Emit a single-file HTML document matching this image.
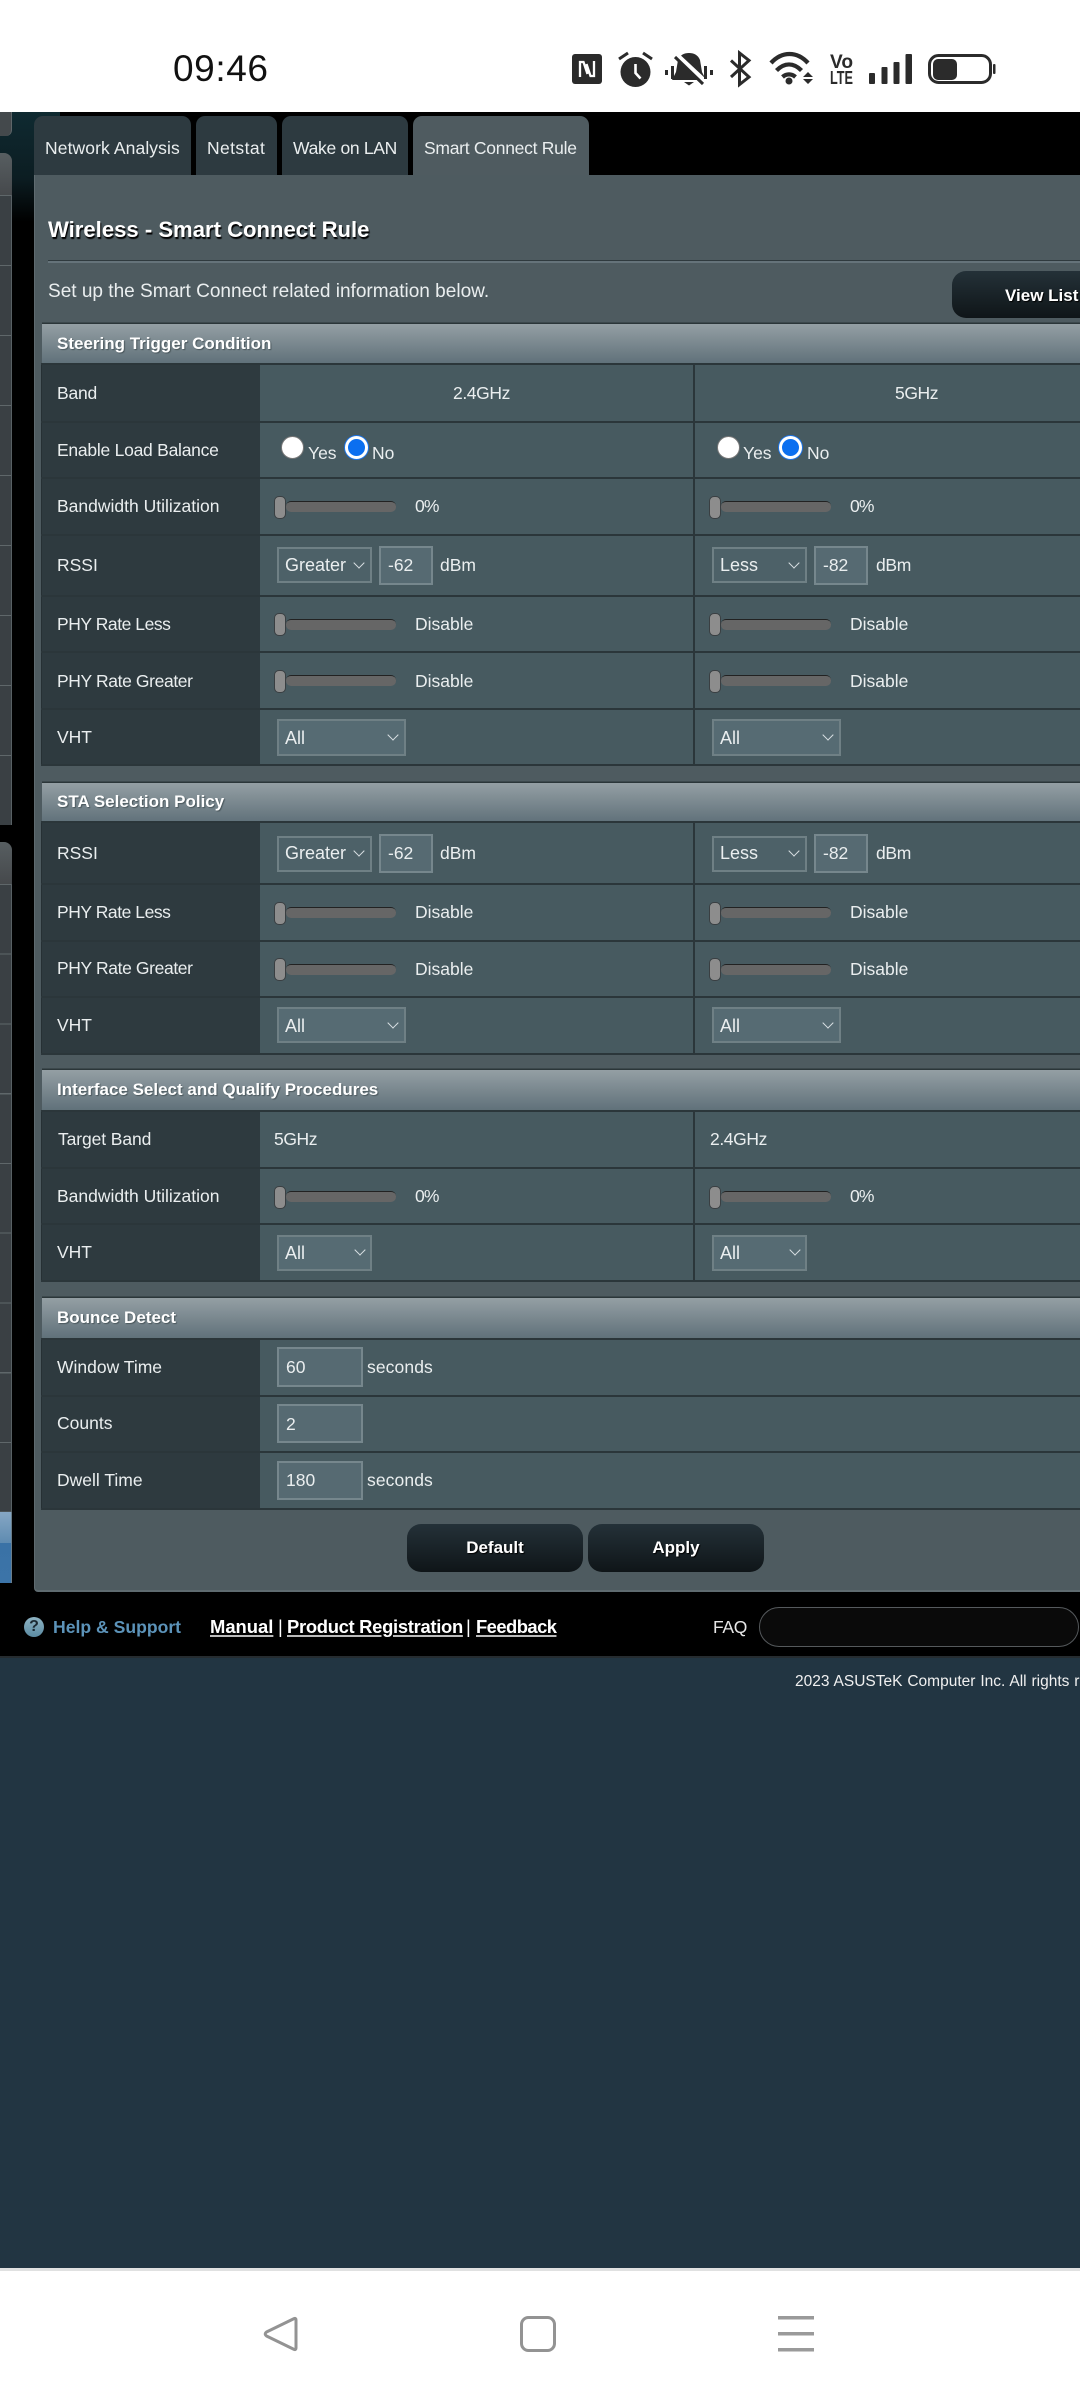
<!DOCTYPE html>
<html>
<head>
<meta charset="utf-8">
<title>Wireless - Smart Connect Rule</title>
<style>
html,body{margin:0;padding:0;background:#fff}
body{position:relative;width:1080px;height:2400px;overflow:hidden;font-family:"Liberation Sans",Arial,sans-serif;color:#eef2f3}
div,span,svg{position:absolute}
a,b,i{position:static}
.t{line-height:22px;font-size:17.5px;white-space:nowrap;color:#eaeeef}
.h{line-height:22px;font-size:17px;font-weight:bold;white-space:nowrap;color:#fff;left:57px;text-shadow:1px 1px 1px #4a575c}
.hd{left:42px;width:1038px;height:40px;background:linear-gradient(180deg,#949fa4,#5f7079);box-shadow:0 -1.5px 0 #2b3639}
.tb{left:41px;width:1039px;background:linear-gradient(90deg,#2e3a3f 218px,#475a60 218px);border-left:1px solid #263034;box-sizing:border-box}
.ln{left:41px;width:1039px;height:2px;background:#2b363a}
.dv{left:693px;width:2px;background:#2b363a}
.tr{width:110px;height:11px;background:#666;border-radius:5px;border-top:1px solid #222;box-sizing:border-box}
.th{width:12px;height:23px;background:#8d8d8d;border:1px solid #3a3f42;border-radius:5px;box-sizing:border-box}
.s{height:36px;box-sizing:border-box;border:2px solid #6f8085;background:#4d6168}
.s2{background:#566b73}
.i{box-sizing:border-box;border:2px solid #76878d;background:#566a72}
.cv{width:8px;height:8px;border:solid #d8dfe2;border-width:0 1.5px 1.5px 0;transform:rotate(45deg);box-sizing:border-box}
.ra{width:23px;height:23px;border-radius:50%;background:#fff;border:1.5px solid #777;box-sizing:border-box}
.rb{width:23px;height:23px;border-radius:50%;background:#0b6ff0;border:3px solid #fff;box-shadow:0 0 0 1px #1b74e8;box-sizing:border-box}
.tab{top:116px;height:59px;background:#2d3a40;border-radius:9px 9px 0 0}
.btn{background:linear-gradient(180deg,#243138,#0f1518);border-radius:14px;color:#fff;font-weight:bold;font-size:17px;text-align:center;text-shadow:1px 1px 1px #000}
.f{top:1616px;line-height:22px;font-size:18.4px;font-weight:bold;color:#fff;white-space:nowrap}
.f u{text-decoration:underline;text-decoration-color:#bbb;text-decoration-thickness:2px;text-underline-offset:2px}
</style>
</head>
<body>

<!-- status bar -->
<div style="left:0;top:0;width:1080px;height:112px;background:#fff"></div>
<div class="t" style="left:173px;top:47px;line-height:44px;font-size:37px;letter-spacing:.6px;color:#111">09:46</div>
<svg style="left:0;top:0" width="1080" height="112" viewBox="0 0 1080 112">
  <g fill="#2b2b2b" stroke="none">
    <rect x="572" y="54" width="30" height="30" rx="3"/>
    <circle cx="635.5" cy="72" r="15"/>
    <path d="M678 60c2-5 6-7 11-7s9 2 11 7l2 12 4 8h-34l4-8z"/>
    <path d="M684 82h10l-5 3.500z"/>
  </g>
  <g fill="none" stroke="#fff">
    <path d="M580 77V62h3.500l4 12M594 61v15h-3.500l-4-12" transform="translate(0 0)" stroke-width="2.300"/>
    <path d="M635.500 64v9l5 5.500" stroke-width="2.600"/>
    <path d="M676 54l30 28" stroke-width="4.500"/>
  </g>
  <g fill="#2b2b2b" stroke="none">
    <rect x="665" y="70" width="3" height="5"/>
    <rect x="671" y="66" width="3" height="13"/>
    <rect x="704" y="66" width="3" height="13"/>
    <rect x="710" y="70" width="3" height="5"/>
    <circle cx="789" cy="81" r="3.500"/>
    <path d="M803 77l5-5 5 5zM803 79h10l-5 5z"/>
    <rect x="869" y="73" width="6" height="11" rx="1"/>
    <rect x="881.500" y="67" width="6" height="17" rx="1"/>
    <rect x="893.500" y="62" width="6" height="22" rx="1"/>
    <rect x="905.500" y="54" width="6.500" height="30" rx="1"/>
    <rect x="933" y="59" width="24" height="21" rx="5"/>
    <rect x="993" y="64" width="2.500" height="10" rx="1"/>
  </g>
  <g fill="none" stroke="#2b2b2b">
    <path d="M619 59l9-6M652 59l-9-6" stroke-width="3"/>
    <path d="M675 57l28 27" stroke-width="3"/>
    <path d="M731 60.500l18 16.500-9.500 7.500V53l9.500 7.500-18 16.500" stroke-width="3"/>
    <path d="M771 63c11-12 26-12 37 0M776.500 70.500c8-8 17-8 25 0M782.500 77c4-3.500 9-3.500 13 0" stroke-width="4.300"/>
    <rect x="929.500" y="55.500" width="61" height="27" rx="9" stroke-width="3"/>
  </g>
  <text x="830" y="68" font-family="Liberation Sans" font-weight="bold" font-size="19" fill="#2b2b2b" textLength="23" lengthAdjust="spacingAndGlyphs">Vo</text>
  <text x="830" y="84" font-family="Liberation Sans" font-weight="bold" font-size="18" fill="#2b2b2b" textLength="23" lengthAdjust="spacingAndGlyphs">LTE</text>
</svg>

<!-- black page header -->
<div style="left:0;top:112px;width:1080px;height:1544px;background:#000"></div>
<div style="left:0;top:112px;width:60px;height:110px;background:linear-gradient(180deg,#0f2a31,#0c1d22 60%,#000)"></div>

<!-- sidebar -->
<div style="left:0;top:112px;width:12px;height:24px;background:#44494c;border-radius:0 0 6px 0;border-right:1px solid #5e6669;box-sizing:border-box"></div>
<div style="left:0;top:153px;width:12px;height:42px;background:linear-gradient(180deg,#575e61,#46494c);border-radius:0 8px 0 0"></div>
<div style="left:0;top:195px;width:12px;height:630px;background:repeating-linear-gradient(180deg,#5f676a 0 1px,#3a4044 1px 70px);border-right:1px solid #586064;box-sizing:border-box"></div>
<div style="left:0;top:842px;width:12px;height:42px;background:linear-gradient(180deg,#575e61,#46494c);border-radius:0 8px 0 0"></div>
<div style="left:0;top:884px;width:12px;height:628px;background:repeating-linear-gradient(180deg,#5f676a 0 1px,#3a4044 1px 69.75px);border-right:1px solid #586064;box-sizing:border-box"></div>
<div style="left:0;top:1512px;width:12px;height:71px;background:linear-gradient(180deg,#86a7c4 0,#5e8bb1 44%,#3a72a6 44%,#3c74a8 100%);border-right:1px solid #6a7c88;box-sizing:border-box"></div>

<!-- tabs -->
<div class="tab" style="left:34px;width:157px"></div>
<div class="tab" style="left:196px;width:81px"></div>
<div class="tab" style="left:282px;width:126px"></div>
<div class="tab" style="left:413px;width:176px;background:#4f5b60"></div>
<div class="t" style="left:45px;top:137px;letter-spacing:.1px">Network Analysis</div>
<div class="t" style="left:207px;top:137px;letter-spacing:.4px">Netstat</div>
<div class="t" style="left:293px;top:137px;letter-spacing:-.3px">Wake on LAN</div>
<div class="t" style="left:424px;top:137px;letter-spacing:-.27px">Smart Connect Rule</div>

<!-- panel -->
<div style="left:34px;top:175px;width:1046px;height:1417px;background:#4e5b60;border-left:1px solid #5f6b70;border-bottom:2px solid #5f6b70;border-radius:0 0 0 4px;box-sizing:border-box"></div>
<div class="t" style="left:48px;top:218px;font-size:22.1px;line-height:24px;font-weight:bold;color:#fff;text-shadow:1px 2px 1px #000">Wireless - Smart Connect Rule</div>
<div style="left:48px;top:260px;width:1032px;height:1px;background:#2f3a3e"></div>
<div style="left:48px;top:261px;width:1032px;height:2px;background:#65737a"></div>
<div class="t" style="left:48px;top:281px;font-size:19.05px">Set up the Smart Connect related information below.</div>
<div class="btn" style="left:952px;top:271px;width:128px;height:47px;line-height:50px;text-align:left;text-indent:53px;border-radius:14px 0 0 14px;white-space:nowrap;overflow:hidden">View List</div>

<!-- Section 1 -->
<div class="hd" style="top:324px"></div>
<div class="h" style="top:333px">Steering Trigger Condition</div>
<div class="tb" style="top:364px;height:402px"></div>
<div class="ln" style="top:363px"></div><div class="ln" style="top:421px"></div><div class="ln" style="top:477px"></div><div class="ln" style="top:534px"></div><div class="ln" style="top:595px"></div><div class="ln" style="top:651px"></div><div class="ln" style="top:708px"></div><div class="ln" style="top:764px"></div>
<div class="dv" style="top:364px;height:402px"></div>
<div class="t" style="left:57px;top:382px;letter-spacing:-.2px">Band</div>
<div class="t" style="left:57px;top:439px;letter-spacing:-.25px">Enable Load Balance</div>
<div class="t" style="left:57px;top:495px">Bandwidth Utilization</div>
<div class="t" style="left:57px;top:554px">RSSI</div>
<div class="t" style="left:57px;top:613px;letter-spacing:-.45px">PHY Rate Less</div>
<div class="t" style="left:57px;top:670px;letter-spacing:-.38px">PHY Rate Greater</div>
<div class="t" style="left:57px;top:726px">VHT</div>
<div class="t" style="left:453px;top:382px;letter-spacing:-.4px">2.4GHz</div>
<div class="t" style="left:895px;top:382px;letter-spacing:-.4px">5GHz</div>

<div class="ra" style="left:281px;top:436px"></div><div class="t" style="left:308px;top:442px">Yes</div>
<div class="rb" style="left:345px;top:436px"></div><div class="t" style="left:372px;top:442px">No</div>
<div class="ra" style="left:717px;top:436px"></div><div class="t" style="left:743px;top:442px">Yes</div>
<div class="rb" style="left:779px;top:436px"></div><div class="t" style="left:807px;top:442px">No</div>

<div class="tr" style="left:286px;top:501px"></div><div class="th" style="left:274px;top:496px"></div><div class="t" style="left:415px;top:495px;letter-spacing:-.8px">0%</div>
<div class="tr" style="left:721px;top:501px"></div><div class="th" style="left:709px;top:496px"></div><div class="t" style="left:850px;top:495px;letter-spacing:-.8px">0%</div>

<div class="s" style="left:277px;top:547px;width:95px"></div><div class="t" style="left:285px;top:554px;font-size:18px">Greater</div><div class="cv" style="left:355px;top:559px"></div>
<div class="i" style="left:379px;top:546px;width:54px;height:39px"></div><div class="t" style="left:388px;top:554px">-62</div><div class="t" style="left:440px;top:554px">dBm</div>
<div class="s" style="left:712px;top:547px;width:95px"></div><div class="t" style="left:720px;top:554px;font-size:18px">Less</div><div class="cv" style="left:790px;top:559px"></div>
<div class="i" style="left:814px;top:546px;width:54px;height:39px"></div><div class="t" style="left:823px;top:554px">-82</div><div class="t" style="left:876px;top:554px;letter-spacing:-.3px">dBm</div>

<div class="tr" style="left:286px;top:619px"></div><div class="th" style="left:274px;top:613px"></div><div class="t" style="left:415px;top:613px">Disable</div>
<div class="tr" style="left:721px;top:619px"></div><div class="th" style="left:709px;top:613px"></div><div class="t" style="left:850px;top:613px">Disable</div>
<div class="tr" style="left:286px;top:675px"></div><div class="th" style="left:274px;top:670px"></div><div class="t" style="left:415px;top:670px">Disable</div>
<div class="tr" style="left:721px;top:675px"></div><div class="th" style="left:709px;top:670px"></div><div class="t" style="left:850px;top:670px">Disable</div>

<div class="s s2" style="left:277px;top:719px;width:129px;height:37px"></div><div class="t" style="left:285px;top:727px;font-size:18px">All</div><div class="cv" style="left:389px;top:731px"></div>
<div class="s s2" style="left:712px;top:719px;width:129px;height:37px"></div><div class="t" style="left:720px;top:727px;font-size:18px">All</div><div class="cv" style="left:824px;top:731px"></div>

<!-- Section 2 -->
<div class="hd" style="top:783px"></div>
<div class="h" style="top:791px">STA Selection Policy</div>
<div class="tb" style="top:822px;height:232px"></div>
<div class="ln" style="top:821px"></div><div class="ln" style="top:883px"></div><div class="ln" style="top:940px"></div><div class="ln" style="top:996px"></div><div class="ln" style="top:1053px"></div>
<div class="dv" style="top:822px;height:232px"></div>
<div class="t" style="left:57px;top:842px">RSSI</div>
<div class="t" style="left:57px;top:901px;letter-spacing:-.45px">PHY Rate Less</div>
<div class="t" style="left:57px;top:957px;letter-spacing:-.38px">PHY Rate Greater</div>
<div class="t" style="left:57px;top:1014px">VHT</div>

<div class="s" style="left:277px;top:836px;width:95px"></div><div class="t" style="left:285px;top:842px;font-size:18px">Greater</div><div class="cv" style="left:355px;top:847px"></div>
<div class="i" style="left:379px;top:834px;width:54px;height:39px"></div><div class="t" style="left:388px;top:842px">-62</div><div class="t" style="left:440px;top:842px">dBm</div>
<div class="s" style="left:712px;top:836px;width:95px"></div><div class="t" style="left:720px;top:842px;font-size:18px">Less</div><div class="cv" style="left:790px;top:847px"></div>
<div class="i" style="left:814px;top:834px;width:54px;height:39px"></div><div class="t" style="left:823px;top:842px">-82</div><div class="t" style="left:876px;top:842px;letter-spacing:-.3px">dBm</div>

<div class="tr" style="left:286px;top:907px"></div><div class="th" style="left:274px;top:902px"></div><div class="t" style="left:415px;top:901px">Disable</div>
<div class="tr" style="left:721px;top:907px"></div><div class="th" style="left:709px;top:902px"></div><div class="t" style="left:850px;top:901px">Disable</div>
<div class="tr" style="left:286px;top:964px"></div><div class="th" style="left:274px;top:958px"></div><div class="t" style="left:415px;top:958px">Disable</div>
<div class="tr" style="left:721px;top:964px"></div><div class="th" style="left:709px;top:958px"></div><div class="t" style="left:850px;top:958px">Disable</div>

<div class="s s2" style="left:277px;top:1007px;width:129px"></div><div class="t" style="left:285px;top:1015px;font-size:18px">All</div><div class="cv" style="left:389px;top:1019px"></div>
<div class="s s2" style="left:712px;top:1007px;width:129px"></div><div class="t" style="left:720px;top:1015px;font-size:18px">All</div><div class="cv" style="left:824px;top:1019px"></div>

<!-- Section 3 -->
<div class="hd" style="top:1070px;height:41px"></div>
<div class="h" style="top:1079px">Interface Select and Qualify Procedures</div>
<div class="tb" style="top:1111px;height:170px"></div>
<div class="ln" style="top:1110px"></div><div class="ln" style="top:1167px"></div><div class="ln" style="top:1223px"></div><div class="ln" style="top:1280px"></div>
<div class="dv" style="top:1111px;height:170px"></div>
<div class="t" style="left:58px;top:1128px;letter-spacing:-.1px">Target Band</div>
<div class="t" style="left:57px;top:1185px">Bandwidth Utilization</div>
<div class="t" style="left:57px;top:1241px">VHT</div>
<div class="t" style="left:274px;top:1128px;letter-spacing:-.4px">5GHz</div>
<div class="t" style="left:710px;top:1128px;letter-spacing:-.4px">2.4GHz</div>

<div class="tr" style="left:286px;top:1191px"></div><div class="th" style="left:274px;top:1186px"></div><div class="t" style="left:415px;top:1185px;letter-spacing:-.8px">0%</div>
<div class="tr" style="left:721px;top:1191px"></div><div class="th" style="left:709px;top:1186px"></div><div class="t" style="left:850px;top:1185px;letter-spacing:-.8px">0%</div>

<div class="s s2" style="left:277px;top:1235px;width:95px"></div><div class="t" style="left:285px;top:1242px;font-size:18px">All</div><div class="cv" style="left:356px;top:1246px"></div>
<div class="s s2" style="left:712px;top:1235px;width:95px"></div><div class="t" style="left:720px;top:1242px;font-size:18px">All</div><div class="cv" style="left:791px;top:1246px"></div>

<!-- Section 4 -->
<div class="hd" style="top:1298px;height:41px"></div>
<div class="h" style="top:1307px">Bounce Detect</div>
<div class="tb" style="top:1339px;height:170px"></div>
<div class="ln" style="top:1338px"></div><div class="ln" style="top:1395px"></div><div class="ln" style="top:1451px"></div><div class="ln" style="top:1508px"></div>
<div class="t" style="left:57px;top:1356px">Window Time</div>
<div class="t" style="left:57px;top:1412px">Counts</div>
<div class="t" style="left:57px;top:1469px">Dwell Time</div>
<div class="i" style="left:277px;top:1347px;width:86px;height:40px"></div><div class="t" style="left:286px;top:1356px">60</div><div class="t" style="left:367px;top:1356px;letter-spacing:.1px">seconds</div>
<div class="i" style="left:277px;top:1404px;width:86px;height:39px"></div><div class="t" style="left:286px;top:1413px">2</div>
<div class="i" style="left:277px;top:1461px;width:86px;height:39px"></div><div class="t" style="left:286px;top:1469px">180</div><div class="t" style="left:367px;top:1469px;letter-spacing:.1px">seconds</div>

<div class="btn" style="left:407px;top:1524px;width:176px;height:48px;line-height:48px">Default</div>
<div class="btn" style="left:588px;top:1524px;width:176px;height:48px;line-height:48px">Apply</div>

<!-- footer -->
<div style="left:24px;top:1617px;width:20px;height:20px;border-radius:50%;background:linear-gradient(180deg,#8db3c3,#5b8ba3);color:#1b2a33;font-size:16px;font-weight:bold;line-height:20px;text-align:center">?</div>
<div class="f" style="left:53px;font-size:17.6px;color:#5c93b9">Help &amp; Support</div>
<div class="f" style="left:210px"><u>Manual</u></div>
<div class="f" style="left:278px;font-weight:normal">|</div>
<div class="f" style="left:287px;letter-spacing:-.3px"><u>Product Registration</u></div>
<div class="f" style="left:466px;font-weight:normal">|</div>
<div class="f" style="left:476px;letter-spacing:-.55px"><u>Feedback</u></div>
<div class="t" style="left:713px;top:1616px;letter-spacing:-.3px;color:#e6e6e6">FAQ</div>
<div style="left:759px;top:1607px;width:320px;height:40px;box-sizing:border-box;border:1.5px solid #55595c;border-radius:20px;background:#0a0a0a"></div>

<!-- bottom blue -->
<div style="left:0;top:1656px;width:1080px;height:612px;background:#223542;border-top:2px solid #262c30;box-sizing:border-box"></div>
<div class="t" style="left:795px;top:1671px;width:285px;overflow:hidden;font-size:15.5px;word-spacing:.6px;color:#f0f0f0">2023 ASUSTeK Computer Inc. All rights reserved.</div>

<!-- nav bar -->
<div style="left:0;top:2268px;width:1080px;height:3px;background:#e0e1e1"></div>
<svg style="left:0;top:2271px" width="1080" height="129" viewBox="0 2271 1080 129">
  <path d="M294 2318.600Q296 2317.800 296 2320V2348Q296 2350.200 294 2349.400L266.500 2336Q264 2334 266.500 2332Z" fill="none" stroke="#939393" stroke-width="3" stroke-linejoin="round"/>
  <rect x="521.500" y="2317.500" width="33" height="33" rx="7" fill="none" stroke="#939393" stroke-width="3"/>
  <g fill="#9a9a9a">
    <rect x="778" y="2316" width="36" height="3.500"/>
    <rect x="778" y="2332" width="36" height="3.500"/>
    <rect x="778" y="2348" width="36" height="3.500"/>
  </g>
</svg>
</body>
</html>
